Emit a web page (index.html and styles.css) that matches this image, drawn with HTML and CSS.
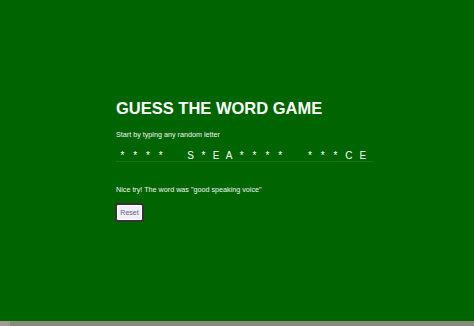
FILE: index.html
```html
<!DOCTYPE html>
<html>
<head>
<meta charset="utf-8">
<link rel="stylesheet" href="styles.css">
</head>
<body>
<div class="page">
  <main class="game">
    <h1 class="title">GUESS THE WORD GAME</h1>
    <p class="hint">Start by typing any random letter</p>
    <div class="word">
      <span class="cell">*</span><span class="cell">*</span><span class="cell">*</span><span class="cell">*</span>
      <span class="gap"></span>
      <span class="cell">S</span><span class="cell">*</span><span class="cell">E</span><span class="cell">A</span><span class="cell">*</span><span class="cell">*</span><span class="cell">*</span><span class="cell">*</span>
      <span class="gap"></span>
      <span class="cell">*</span><span class="cell">*</span><span class="cell">*</span><span class="cell wide">C</span><span class="cell wide">E</span>
    </div>
    <p class="result">Nice try! The word was "good speaking voice"</p>
    <button class="reset">Reset</button>
  </main>
  <div class="scrollbar"><span class="scroll-btn"></span></div>
</div>
</body>
</html>
```

FILE: styles.css
```css
html, body {
  margin: 0;
  padding: 0;
  height: 100%;
}
body {
  background: #006400;
  font-family: "Liberation Sans", Arial, sans-serif;
  color: #ffffff;
}
.page {
  display: flex;
  flex-direction: column;
  height: 100vh;
}
.game {
  flex: 1;
  padding: 98px 0 0 116px;
  display: flex;
  flex-direction: column;
  align-items: flex-start;
}
.title {
  margin: 0;
  font-size: 16.5px;
  line-height: 20px;
  font-weight: bold;
}
.hint {
  margin: 11.5px 0 0;
  font-size: 7.2px;
  line-height: 10px;
  color: #f2f7f2;
}
.word {
  margin-top: 10px;
  display: flex;
  font-size: 10px;
  line-height: 11px;
  border-bottom: 1px solid rgba(255, 255, 255, 0.09);
  padding-right: 4px;
}
.cell {
  width: 12.8px;
  text-align: center;
}
.cell.wide {
  width: 14px;
}
.gap {
  width: 17px;
}
.result {
  margin: 23px 0 0;
  font-size: 7.2px;
  line-height: 10px;
  color: #f2f7f2;
}
.reset {
  margin: 8px 0 0 -1px;
  width: 29px;
  height: 19px;
  padding: 0;
  font-family: "Liberation Sans", Arial, sans-serif;
  font-size: 7px;
  color: #6a6078;
  background: #f1effb;
  border: 2px solid #333333;
  border-radius: 3px;
  box-shadow: inset 0 0 0 1px #ffffff;
}
.scrollbar {
  height: 5px;
  background: #8a8a7c;
  display: flex;
}
.scroll-btn {
  width: 10px;
  background: #a39a94;
}
```
